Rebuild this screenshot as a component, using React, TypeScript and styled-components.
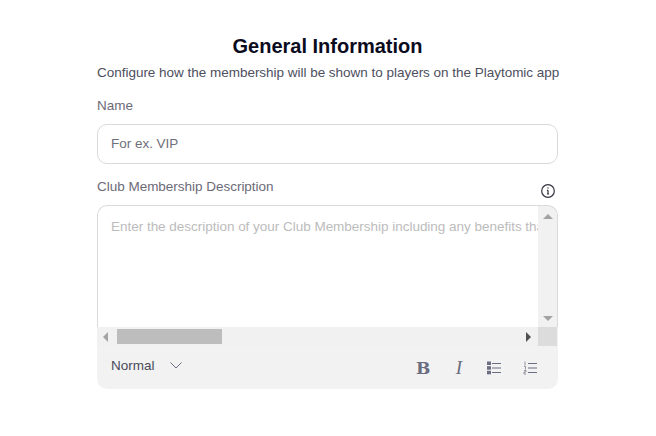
import React from 'react'
import styled, { createGlobalStyle } from 'styled-components'

const GlobalStyle = createGlobalStyle`
  html, body {
    margin: 0;
    padding: 0;
    background: #fff;
  }
  body {
    font-family: "Liberation Sans", Arial, sans-serif;
  }
`

const Page = styled.main`
  width: 656px;
  height: 436px;
  overflow: hidden;
  box-sizing: border-box;
  padding: 34px 98px 0 97px;
`

const Title = styled.h1`
  margin: 0;
  height: 24px;
  font-size: 20px;
  line-height: 24px;
  font-weight: 700;
  color: #0b0b1e;
  text-align: center;
`

const Subtitle = styled.p`
  margin: 7px 0 0;
  font-size: 13.5px;
  line-height: 16px;
  letter-spacing: -0.02px;
  color: #4d4f5e;
  white-space: nowrap;
`

const Label = styled.label`
  display: block;
  font-size: 13.5px;
  line-height: 16px;
  letter-spacing: -0.02px;
  color: #6c6a78;
`

const NameField = styled.div`
  margin-top: 17px;
`

const Input = styled.input`
  display: block;
  box-sizing: border-box;
  width: 100%;
  height: 40px;
  margin-top: 10px;
  padding: 0 13px 1px;
  border: 1px solid #dadada;
  border-radius: 10px;
  background: #fff;
  font-family: inherit;
  font-size: 13.5px;
  letter-spacing: -0.02px;
  outline: none;

  &::placeholder {
    color: #6f6f7b;
    opacity: 1;
  }
`

const DescriptionHeader = styled.div`
  display: flex;
  justify-content: space-between;
  margin-top: 15px;
  height: 26px;
`

const InfoIcon = styled.svg`
  width: 16px;
  height: 16px;
  margin: 4px 2px 0 0;
`

const Editor = styled.div`
  box-sizing: border-box;
  width: 461px;
  height: 184px;
  border-radius: 10px;
  overflow: hidden;
  background: #f2f2f2;
`

const EditorBody = styled.div`
  display: grid;
  grid-template-columns: 1fr 20px;
  grid-template-rows: 122px 19px;
  height: 141px;
`

const TextArea = styled.div`
  box-sizing: border-box;
  padding: 13px 0 0 13px;
  overflow: hidden;
  background: #fff;
  border-left: 1px solid #dadada;
  border-top: 1px solid #dadada;
  border-top-left-radius: 10px;
  font-size: 13.5px;
  line-height: 16px;
  letter-spacing: -0.02px;
  color: #bcbcbc;
  white-space: nowrap;
`

const VerticalBar = styled.div`
  display: flex;
  flex-direction: column;
  justify-content: space-between;
  align-items: center;
  padding: 8px 0 6px;
  background: #f1f1f1;
  border-top: 1px solid #dadada;
  border-right: 1px solid #dadada;
  border-top-right-radius: 10px;
  box-sizing: border-box;
`

const Arrow = styled.span<{ $dir: 'up' | 'down' | 'left' | 'right'; $dark?: boolean }>`
  display: block;
  width: 0;
  height: 0;
  border-style: solid;
  border-color: transparent;
  ${({ $dir, $dark }) => {
    const color = $dark ? '#505050' : '#a3a3a3'
    if ($dir === 'up') return `border-width: 0 5px 5px; border-bottom-color: ${color};`
    if ($dir === 'down') return `border-width: 5px 5px 0; border-top-color: ${color};`
    if ($dir === 'left') return `border-width: 5px 5px 5px 0; border-right-color: ${color};`
    return `border-width: 5px 0 5px 5px; border-left-color: ${color};`
  }}
`

const HorizontalBar = styled.div`
  display: flex;
  align-items: center;
  justify-content: space-between;
  padding: 0 7px 0 6px;
  background: #f1f1f1;
`

const ThumbTrack = styled.div`
  flex: 1;
  margin: 0 11px 0 9px;
`

const Thumb = styled.div`
  width: 105px;
  height: 15px;
  background: #bdbdbd;
`

const Corner = styled.div`
  background: #dcdcdc;
  margin-right: 1px;
`

const Toolbar = styled.div`
  display: flex;
  align-items: center;
  justify-content: space-between;
  height: 43px;
  padding: 0 20px 0 14px;
  box-sizing: border-box;
`

const FormatSelect = styled.div`
  display: flex;
  align-items: center;
  gap: 16px;
  margin-top: -4px;
  font-size: 13.5px;
  letter-spacing: -0.02px;
  color: #4a4a5c;
`

const ToolGroup = styled.div`
  display: flex;
  align-items: center;
  gap: 19.6px;
`

const ToolIcon = styled.svg`
  display: block;
  width: 16px;
  height: 16px;
`

const Bold = styled.span`
  width: 16px;
  text-align: center;
  font-family: "DejaVu Serif", "Liberation Serif", serif;
  font-weight: 700;
  font-size: 17px;
  line-height: 16px;
  color: #6b6e80;
`

const Italic = styled(Bold)`
  font-family: "Liberation Serif", serif;
  font-weight: 400;
  font-style: italic;
  font-size: 19px;
`

export default function App() {
  return (
    <>
      <GlobalStyle />
      <Page>
        <Title>General Information</Title>
        <Subtitle>Configure how the membership will be shown to players on the Playtomic app</Subtitle>
        <NameField>
          <Label>Name</Label>
          <Input placeholder="For ex. VIP" />
        </NameField>
        <DescriptionHeader>
          <Label>Club Membership Description</Label>
          <InfoIcon viewBox="0 0 16 16" fill="none" stroke="#33343f" strokeWidth="1.2">
            <circle cx="8" cy="8" r="6.3" />
            <path d="M8 7.2V11M6.9 7.300H8M6.9 11h2.200" />
            <circle cx="8" cy="5" r="0.7" fill="#33343f" stroke="none" />
          </InfoIcon>
        </DescriptionHeader>
        <Editor>
          <EditorBody>
            <TextArea>Enter the description of your Club Membership including any benefits that players will get</TextArea>
            <VerticalBar>
              <Arrow $dir="up" />
              <Arrow $dir="down" />
            </VerticalBar>
            <HorizontalBar>
              <Arrow $dir="left" />
              <ThumbTrack>
                <Thumb />
              </ThumbTrack>
              <Arrow $dir="right" $dark />
            </HorizontalBar>
            <Corner />
          </EditorBody>
          <Toolbar>
            <FormatSelect>
              Normal
              <svg width="12" height="7" viewBox="0 0 12 7" fill="none" stroke="#6c6e7e" strokeWidth="1">
                <path d="M0.500 0.500l5.500 5.500 5.500-5.500" />
              </svg>
            </FormatSelect>
            <ToolGroup>
              <Bold>B</Bold>
              <Italic>I</Italic>
              <ToolIcon viewBox="0 0 16 16" fill="none" stroke="#6b6e80" strokeWidth="1">
                <path d="M6 3.500h9M6 8h9M6 12.500h9" />
                <rect x="1" y="1.500" width="4" height="3.500" fill="#6b6e80" stroke="none" />
                <rect x="1" y="6.200" width="4" height="3.500" fill="#6b6e80" stroke="none" />
                <rect x="1" y="10.800" width="4" height="3.500" fill="#6b6e80" stroke="none" />
              </ToolIcon>
              <ToolIcon viewBox="0 0 16 16" fill="none" stroke="#6b6e80" strokeWidth="1">
                <path d="M6 3.500h9M6 8h9M6 12.500h9" />
                <path d="M3 1.500v4M2 10.500h2v1.500H2v2h2M2 6.500h1.500v3" strokeWidth="0.7" />
              </ToolIcon>
            </ToolGroup>
          </Toolbar>
        </Editor>
      </Page>
    </>
  )
}
